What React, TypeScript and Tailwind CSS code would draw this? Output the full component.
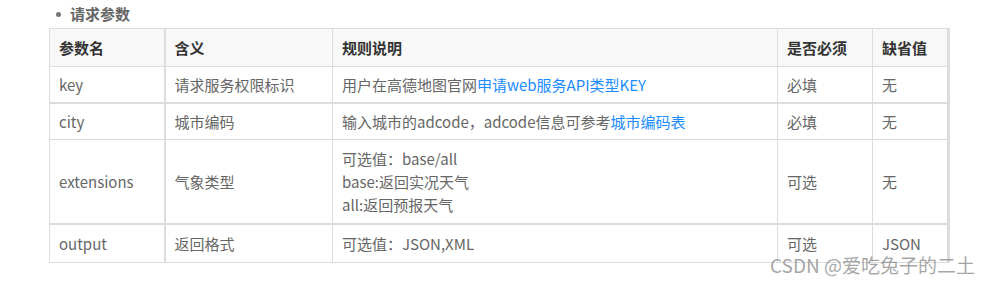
const font = 'font-["Noto_Sans_CJK_SC","Noto_Sans",sans-serif]'

const rows: { name: string; desc: string; rule: React.ReactNode; req: string; def: string }[] = [
  {
    name: 'key',
    desc: '请求服务权限标识',
    rule: (
      <>
        用户在高德地图官网<span className="text-[#1a8cff]">申请web服务API类型KEY</span>
      </>
    ),
    req: '必填',
    def: '无',
  },
  {
    name: 'city',
    desc: '城市编码',
    rule: (
      <>
        输入城市的adcode，adcode信息可参考<span className="text-[#1a8cff]">城市编码表</span>
      </>
    ),
    req: '必填',
    def: '无',
  },
  {
    name: 'extensions',
    desc: '气象类型',
    rule: (
      <>
        可选值：base/all
        <br />
        base:返回实况天气
        <br />
        all:返回预报天气
      </>
    ),
    req: '可选',
    def: '无',
  },
  { name: 'output', desc: '返回格式', rule: '可选值：JSON,XML', req: '可选', def: 'JSON' },
]

const head = 'border border-[#dcdcdc] px-[9px] py-[7px] align-middle font-bold'
const cell = 'border border-[#dcdcdc] px-[9px] align-middle'

export default function App() {
  return (
    <div className={`relative h-[284px] w-[997px] bg-white ${font}`}>
      <div className="flex items-center pl-[56px] pt-[3px] text-[15px] leading-[22px] font-bold text-[#666]">
        <span className="mr-[9px] inline-block h-[5px] w-[5px] rounded-full bg-[#777]" />
        请求参数
      </div>
      <table className="ml-[49px] mt-[3px] w-[901px] table-fixed border-collapse border-r-[3px] border-r-[#dcdcdc] text-left text-[15px] leading-[23px] text-[#666]">
        <colgroup>
          <col className="w-[115px]" />
          <col className="w-[168px]" />
          <col className="w-[445px]" />
          <col className="w-[95px]" />
          <col />
        </colgroup>
        <thead>
          <tr className="bg-[#f8f8f8] text-[#333]">
            <th className={`${head} border-r-2`}>参数名</th>
            <th className={head}>含义</th>
            <th className={head}>规则说明</th>
            <th className={head}>是否必须</th>
            <th className={head}>缺省值</th>
          </tr>
        </thead>
        <tbody>
          {rows.map((r, i) => {
            const pad = i === 2 ? 'py-[7px]' : i === 3 ? 'py-[7px]' : 'py-[6px]'
            return (
              <tr key={r.name} className={i === 0 || i === 2 ? 'border-b-2 border-b-[#dcdcdc]' : ''}>
                <td className={`${cell} ${pad} border-r-2`}>{r.name}</td>
                <td className={`${cell} ${pad}`}>{r.desc}</td>
                <td className={`${cell} ${pad}`}>{r.rule}</td>
                <td className={`${cell} ${pad}`}>{r.req}</td>
                <td className={`${cell} ${pad}`}>{r.def}</td>
              </tr>
            )
          })}
        </tbody>
      </table>
      <div className="absolute left-[770px] top-[254px] text-[19px] leading-[22px] text-[#888]/75">
        CSDN @爱吃兔子的二土
      </div>
    </div>
  )
}
